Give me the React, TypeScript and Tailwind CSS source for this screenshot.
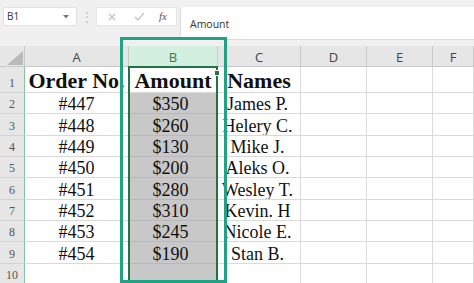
import React from "react";

const rows = [
    ["#447", "$350", "James P."],
    ["#448", "$260", "Helery C."],
    ["#449", "$130", "Mike J."],
    ["#450", "$200", "Aleks O."],
    ["#451", "$280", "Wesley T."],
    ["#452", "$310", "Kevin. H"],
    ["#453", "$245", "Nicole E."],
    ["#454", "$190", "Stan B."],
    ["", "", ""],
];

const cols = ["A", "B", "C", "D", "E", "F"];
const grid = "grid grid-cols-[25px_104px_89px_83px_66px_66px_1fr]";
const cell = "border-r border-b border-[#dadada] flex items-end justify-center overflow-hidden whitespace-nowrap";

function Toolbar() {
    return (
        <div className="h-[46px] bg-[#f0f0f0] flex items-start pt-[7px] pl-[3px]">
            <div className="w-[74px] h-[19px] bg-white border border-[#e2e2e2] flex items-center justify-between pl-[3px] pr-[7px]">
                <span className="text-[10px] text-[#333]">B1</span>
                <svg width="6" height="4" viewBox="0 0 6 4">
                    <path d="M0 0h6L3 3.5z" fill="#777" />
                </svg>
            </div>
            <div className="w-[19px] h-[19px] flex items-center justify-center text-[12px] text-[#c4c4c4]">⋮</div>
            <div className="w-[81px] h-[19px] bg-white border border-[#e6e6e6] flex items-center">
                <svg width="8" height="8" viewBox="0 0 8 8" className="ml-[11px]">
                    <path d="M1 1l6 6M7 1L1 7" stroke="#c2c2c2" strokeWidth="1.2" />
                </svg>
                <svg width="11" height="9" viewBox="0 0 11 9" className="ml-[18px]">
                    <path d="M1 5l3 3 6-7" stroke="#c2c2c2" strokeWidth="1.2" fill="none" />
                </svg>
                <span className="ml-[14px] text-[11px] italic text-[#555] font-['Liberation_Serif',serif]">fx</span>
            </div>
            <div className="ml-[3px] flex-1 h-[33px] bg-white border-l border-b border-[#dcdcdc] pl-[9px] pt-[3px]">
                <span className="text-[10.5px] text-[#333]">Amount</span>
            </div>
        </div>
    );
}

function HeaderRow() {
    return (
        <div className={`${grid} h-[21px] bg-[#e6e6e6]`}>
            <div className="border-r border-b border-[#c8c8c8] relative">
                <svg width="16" height="14" viewBox="0 0 16 14" className="absolute left-[7px] top-[5px]">
                    <path d="M16 0v14H0z" fill="#b9b9b9" />
                </svg>
            </div>
            {cols.map((c) =>
                c === "B" ? (
                    <div key={c} className="border-r border-b border-[#c8c8c8] bg-[#d3efdf] flex items-end justify-center pb-[2px] text-[13px] leading-none text-[#3a7458]">
                        {c}
                    </div>
                ) : (
                    <div key={c} className="border-r border-b border-[#c8c8c8] flex items-end justify-center pb-[2px] text-[13px] leading-none text-[#444]">
                        {c}
                    </div>
                )
            )}
        </div>
    );
}

function RowHeader({ n, tall }: { n: number; tall?: boolean }) {
    return (
        <div className={`${tall ? "h-[26px]" : "h-[21.33px]"} bg-[#e6e6e6] border-r border-r-[#86c3a2] border-b border-b-[#d2d2d2] flex items-end justify-center pb-[3px] text-[12px] leading-none text-[#555]`}>
            {n}
        </div>
    );
}

export default function App() {
    return (
        <div className="w-[474px] h-[283px] overflow-hidden relative bg-white font-['Open_Sans',sans-serif]">
            <Toolbar />
            <HeaderRow />

            <div className={`${grid} font-['Liberation_Serif',serif] text-[#111]`}>
                <RowHeader n={1} tall />
                <div className={`${cell} h-[26px] text-[22px] leading-[22px] font-bold`}>Order No.</div>
                <div className={`${cell} h-[26px] text-[22px] leading-[22px] font-bold`}>Amount</div>
                <div className={`${cell} h-[26px] text-[22px] leading-[22px] font-bold`}>Names</div>
                <div className={`${cell} h-[26px]`} />
                <div className={`${cell} h-[26px]`} />
                <div className={`${cell} h-[26px]`} />

                {rows.map((r, i) => (
                    <React.Fragment key={i}>
                        <RowHeader n={i + 2} />
                        <div className={`${cell} h-[21.33px] text-[18px] leading-[18px]`}>{r[0]}</div>
                        <div className="h-[21.33px] bg-[#c8c8c8] border-r border-b border-[#b8b8b8] flex items-end justify-center overflow-hidden whitespace-nowrap text-[18px] leading-[18px] pr-[5px]">
                            {r[1]}
                        </div>
                        <div className={`${cell} h-[21.33px] text-[18px] leading-[18px] pr-[3px]`}>{r[2]}</div>
                        <div className={`${cell} h-[21.33px]`} />
                        <div className={`${cell} h-[21.33px]`} />
                        <div className={`${cell} h-[21.33px]`} />
                    </React.Fragment>
                ))}
            </div>

            {/* column selection outline + fill handle */}
            <div className="absolute left-[128px] top-[66px] w-[90px] h-[230px] border-2 border-[#217346]" />
            <div className="absolute left-[214px] top-[70px] w-[6px] h-[6px] bg-[#217346] border border-white" />

            {/* annotation box around column B */}
            <div className="absolute left-[120px] top-[37px] w-[107px] h-[246px] border-[3px] border-[#1fa483]" />
        </div>
    );
}
